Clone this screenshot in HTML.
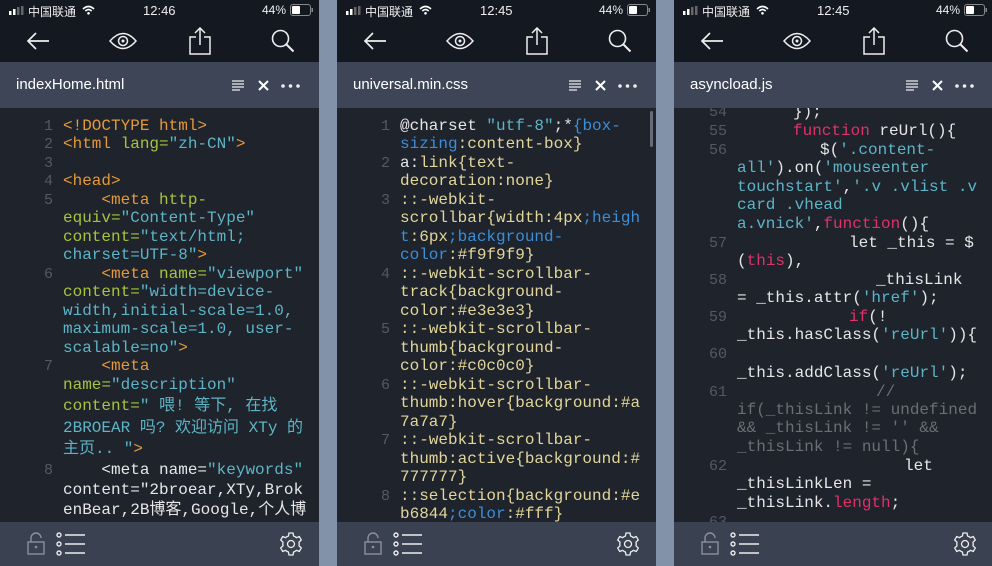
<!DOCTYPE html>
<html><head><meta charset="utf-8"><style>
*{margin:0;padding:0;box-sizing:border-box}
body{width:992px;height:566px;background:#8292a8;position:relative;overflow:hidden;font-family:"Liberation Sans","Noto Sans CJK SC",sans-serif}
.p{position:absolute;top:0;width:319px;height:566px;background:#1e232c;overflow:hidden}
.sb{position:absolute;left:0;top:0;width:100%;height:62px;background:#141821;color:#fff}
.st{position:absolute;top:3px;font-size:12px;color:#eee}
.tb{position:absolute;left:0;top:62px;width:100%;height:46px;background:#3e4557}
.ti{position:absolute;left:16px;top:14px;font-size:15px;color:#fff}
.bb{position:absolute;left:0;top:522px;width:100%;height:44px;background:#3a4150}
.code{position:absolute;left:0;top:0;width:100%;font-family:"Liberation Mono","Noto Sans CJK SC",monospace;font-size:16px;white-space:pre;color:#e6e6e6}
.r{position:absolute;left:63px;height:19px;line-height:19px}
.n{position:absolute;width:30px;text-align:right;height:19px;line-height:19px;color:#535a66;font-size:15px}
.t{color:#e5993a}.a{color:#a6c43c}.s{color:#5db5c6}.b{color:#3b8ed8}.y{color:#e2d69a}.pk{color:#df3269}.c{color:#6b6e72}
svg{position:absolute}
</style></head><body>

<!-- reusable chrome via repeated markup -->
<div class="p" style="left:0">
 <div class="sb">
  <svg style="left:9px;top:6px" width="16" height="9"><rect x="0" y="5" width="2.5" height="4" fill="#fff"/><rect x="4" y="3" width="2.5" height="6" fill="#fff"/><rect x="8" y="1" width="2.5" height="8" fill="#666"/><rect x="12" y="0" width="2.5" height="9" fill="#666"/></svg>
  <span class="st" style="left:28px">中国联通</span>
  <svg style="left:82px;top:5px" width="13" height="10"><path d="M1 4 Q6.5 -1 12 4" stroke="#fff" stroke-width="1.6" fill="none"/><path d="M3.3 6 Q6.5 3 9.7 6" stroke="#fff" stroke-width="1.6" fill="none"/><circle cx="6.5" cy="8.3" r="1.3" fill="#fff"/></svg>
  <span class="st" style="left:143px;font-size:13px">12:46</span>
  <span class="st" style="left:262px">44%</span>
  <svg style="left:290px;top:4px" width="24" height="12"><rect x="0.5" y="0.5" width="20" height="11" rx="2.5" stroke="#888" fill="none"/><rect x="2" y="2" width="8" height="8" rx="1" fill="#fff"/><rect x="21.5" y="4" width="1.5" height="4" fill="#888"/></svg>
  <svg style="left:26px;top:32px" width="24" height="18"><path d="M23 9H2M10 1L2 9l8 8" stroke="#eee" stroke-width="1.7" fill="none"/></svg>
  <svg style="left:109px;top:32px" width="28" height="18"><path d="M1 9Q14 -6 27 9Q14 24 1 9Z" stroke="#eee" stroke-width="1.5" fill="none"/><circle cx="14" cy="9" r="4.5" stroke="#eee" stroke-width="1.5" fill="none"/><circle cx="14" cy="9" r="1.5" fill="#eee"/></svg>
  <svg style="left:189px;top:27px" width="22" height="28"><path d="M7 10H1V27H21V10H15M11 18V1M6 6l5-5 5 5" stroke="#eee" stroke-width="1.5" fill="none"/></svg>
  <svg style="left:271px;top:29px" width="24" height="24"><circle cx="9.5" cy="9.5" r="8" stroke="#eee" stroke-width="1.6" fill="none"/><path d="M15.5 15.5L22.5 22.5" stroke="#eee" stroke-width="2"/></svg>
 </div>
 <div class="tb"><span class="ti">indexHome.html</span>
  <svg style="left:232px;top:18px" width="12" height="11"><path d="M0 1H12M0 4H12M0 7H12M0 10H8" stroke="#eee" stroke-width="1.3"/></svg>
  <svg style="left:258px;top:18px" width="11" height="11"><path d="M1 1L10 10M10 1L1 10" stroke="#fff" stroke-width="2"/></svg>
  <svg style="left:281px;top:22px" width="19" height="4"><circle cx="2" cy="2" r="1.8" fill="#eee"/><circle cx="9.5" cy="2" r="1.8" fill="#eee"/><circle cx="17" cy="2" r="1.8" fill="#eee"/></svg>
 </div>
 <div class="code">
  <div class="n" style="left:23px;top:117px">1</div><div class="r" style="top:117px"><span class="t">&lt;!DOCTYPE html&gt;</span></div>
  <div class="n" style="left:23px;top:135px">2</div><div class="r" style="top:135px"><span class="t">&lt;html </span><span class="a">lang=</span><span class="s">"zh-CN"</span><span class="t">&gt;</span></div>
  <div class="n" style="left:23px;top:154px">3</div>
  <div class="n" style="left:23px;top:172px">4</div><div class="r" style="top:172px"><span class="t">&lt;head&gt;</span></div>
  <div class="n" style="left:23px;top:191px">5</div><div class="r" style="top:191px"><span class="t">    &lt;meta </span><span class="a">http-</span></div>
  <div class="r" style="top:209px"><span class="a">equiv=</span><span class="s">"Content-Type"</span></div>
  <div class="r" style="top:228px"><span class="a">content=</span><span class="s">"text/html;</span></div>
  <div class="r" style="top:246px"><span class="s">charset=UTF-8"</span><span class="t">&gt;</span></div>
  <div class="n" style="left:23px;top:265px">6</div><div class="r" style="top:265px"><span class="t">    &lt;meta </span><span class="a">name=</span><span class="s">"viewport"</span></div>
  <div class="r" style="top:283px"><span class="a">content=</span><span class="s">"width=device-</span></div>
  <div class="r" style="top:302px"><span class="s">width,initial-scale=1.0,</span></div>
  <div class="r" style="top:320px"><span class="s">maximum-scale=1.0, user-</span></div>
  <div class="r" style="top:339px"><span class="s">scalable=no"</span><span class="t">&gt;</span></div>
  <div class="n" style="left:23px;top:357px">7</div><div class="r" style="top:357px"><span class="t">    &lt;meta</span></div>
  <div class="r" style="top:376px"><span class="a">name=</span><span class="s">"description"</span></div>
  <div class="r" style="top:397px"><span class="a">content=</span><span class="s">" 喂! 等下, 在找</span></div>
  <div class="r" style="top:419px"><span class="s">2BROEAR 吗? 欢迎访问 XTy 的</span></div>
  <div class="r" style="top:440px"><span class="s">主页.. "</span><span class="t">&gt;</span></div>
  <div class="n" style="left:23px;top:461px">8</div><div class="r" style="top:461px">    &lt;meta name=<span class="s">"keywords"</span></div>
  <div class="r" style="top:481px">content="2broear,XTy,Brok</div>
  <div class="r" style="top:501px">enBear,2B博客,Google,个人博</div>
 </div>
 <div class="bb">
  <svg style="left:27px;top:10px" width="18" height="23"><path d="M4 10V6a5 5 0 0 1 10 0" stroke="#8a909c" stroke-width="1.4" fill="none"/><rect x="1" y="10" width="16" height="12" stroke="#8a909c" stroke-width="1.4" fill="none"/><circle cx="9" cy="15" r="1.3" fill="#8a909c"/></svg>
  <svg style="left:56px;top:10px" width="30" height="24"><g stroke="#eee" stroke-width="1.4" fill="none"><circle cx="3" cy="3" r="2"/><circle cx="3" cy="12" r="2"/><circle cx="3" cy="21" r="2"/><path d="M9 3H29M9 12H29M9 21H29"/></g></svg>
  <svg style="left:279px;top:10px" width="24" height="24"><g transform="translate(12 12)" stroke="#eee" stroke-width="1.3" fill="none"><circle r="3.5"/><path d="M-2 -11H2L2.6 -8A8 8 0 0 1 5.4 -6.4L8.3 -7.4L10.3 -4L8 -1.8A8 8 0 0 1 8 1.8L10.3 4L8.3 7.4L5.4 6.4A8 8 0 0 1 2.6 8L2 11H-2L-2.6 8A8 8 0 0 1 -5.4 6.4L-8.3 7.4L-10.3 4L-8 1.8A8 8 0 0 1 -8 -1.8L-10.3 -4L-8.3 -7.4L-5.4 -6.4A8 8 0 0 1 -2.6 -8Z"/></g></svg>
 </div>
</div>

<div class="p" style="left:337px">
 <div class="sb">
  <svg style="left:9px;top:6px" width="16" height="9"><rect x="0" y="5" width="2.5" height="4" fill="#fff"/><rect x="4" y="3" width="2.5" height="6" fill="#fff"/><rect x="8" y="1" width="2.5" height="8" fill="#666"/><rect x="12" y="0" width="2.5" height="9" fill="#666"/></svg>
  <span class="st" style="left:28px">中国联通</span>
  <svg style="left:82px;top:5px" width="13" height="10"><path d="M1 4 Q6.5 -1 12 4" stroke="#fff" stroke-width="1.6" fill="none"/><path d="M3.3 6 Q6.5 3 9.7 6" stroke="#fff" stroke-width="1.6" fill="none"/><circle cx="6.5" cy="8.3" r="1.3" fill="#fff"/></svg>
  <span class="st" style="left:143px;font-size:13px">12:45</span>
  <span class="st" style="left:262px">44%</span>
  <svg style="left:290px;top:4px" width="24" height="12"><rect x="0.5" y="0.5" width="20" height="11" rx="2.5" stroke="#888" fill="none"/><rect x="2" y="2" width="8" height="8" rx="1" fill="#fff"/><rect x="21.5" y="4" width="1.5" height="4" fill="#888"/></svg>
  <svg style="left:26px;top:32px" width="24" height="18"><path d="M23 9H2M10 1L2 9l8 8" stroke="#eee" stroke-width="1.7" fill="none"/></svg>
  <svg style="left:109px;top:32px" width="28" height="18"><path d="M1 9Q14 -6 27 9Q14 24 1 9Z" stroke="#eee" stroke-width="1.5" fill="none"/><circle cx="14" cy="9" r="4.5" stroke="#eee" stroke-width="1.5" fill="none"/><circle cx="14" cy="9" r="1.5" fill="#eee"/></svg>
  <svg style="left:189px;top:27px" width="22" height="28"><path d="M7 10H1V27H21V10H15M11 18V1M6 6l5-5 5 5" stroke="#eee" stroke-width="1.5" fill="none"/></svg>
  <svg style="left:271px;top:29px" width="24" height="24"><circle cx="9.5" cy="9.5" r="8" stroke="#eee" stroke-width="1.6" fill="none"/><path d="M15.5 15.5L22.5 22.5" stroke="#eee" stroke-width="2"/></svg>
 </div>
 <div class="tb"><span class="ti">universal.min.css</span>
  <svg style="left:232px;top:18px" width="12" height="11"><path d="M0 1H12M0 4H12M0 7H12M0 10H8" stroke="#eee" stroke-width="1.3"/></svg>
  <svg style="left:258px;top:18px" width="11" height="11"><path d="M1 1L10 10M10 1L1 10" stroke="#fff" stroke-width="2"/></svg>
  <svg style="left:281px;top:22px" width="19" height="4"><circle cx="2" cy="2" r="1.8" fill="#eee"/><circle cx="9.5" cy="2" r="1.8" fill="#eee"/><circle cx="17" cy="2" r="1.8" fill="#eee"/></svg>
 </div>
 <div style="position:absolute;left:313px;top:111px;width:3px;height:36px;background:#666c78;border-radius:2px"></div>
 <div class="code">
  <div class="n" style="left:23px;top:117px">1</div><div class="r" style="top:117px">@charset <span class="s">"utf-8"</span>;*<span class="b">{box-</span></div>
  <div class="r" style="top:135px"><span class="b">sizing</span><span class="y">:content-box}</span></div>
  <div class="n" style="left:23px;top:154px">2</div><div class="r" style="top:154px">a:<span class="y">link{text-</span></div>
  <div class="r y" style="top:172px">decoration:none}</div>
  <div class="n" style="left:23px;top:191px">3</div><div class="r y" style="top:191px">::-webkit-</div>
  <div class="r" style="top:209px"><span class="y">scrollbar{width:4px</span><span class="b">;heigh</span></div>
  <div class="r" style="top:228px"><span class="b">t</span><span class="y">:6px</span><span class="b">;background-</span></div>
  <div class="r" style="top:246px"><span class="b">color</span><span class="y">:#f9f9f9}</span></div>
  <div class="n" style="left:23px;top:265px">4</div><div class="r y" style="top:265px">::-webkit-scrollbar-</div>
  <div class="r y" style="top:283px">track{background-</div>
  <div class="r y" style="top:302px">color:#e3e3e3}</div>
  <div class="n" style="left:23px;top:320px">5</div><div class="r y" style="top:320px">::-webkit-scrollbar-</div>
  <div class="r y" style="top:339px">thumb{background-</div>
  <div class="r y" style="top:357px">color:#c0c0c0}</div>
  <div class="n" style="left:23px;top:376px">6</div><div class="r y" style="top:376px">::-webkit-scrollbar-</div>
  <div class="r y" style="top:394px">thumb:hover{background:#a</div>
  <div class="r y" style="top:413px">7a7a7}</div>
  <div class="n" style="left:23px;top:431px">7</div><div class="r y" style="top:431px">::-webkit-scrollbar-</div>
  <div class="r y" style="top:450px">thumb:active{background:#</div>
  <div class="r y" style="top:468px">777777}</div>
  <div class="n" style="left:23px;top:487px">8</div><div class="r y" style="top:487px">::selection{background:#e</div>
  <div class="r" style="top:505px"><span class="y">b6844</span><span class="b">;color</span><span class="y">:#fff}</span></div>
 </div>
 <div class="bb">
  <svg style="left:27px;top:10px" width="18" height="23"><path d="M4 10V6a5 5 0 0 1 10 0" stroke="#8a909c" stroke-width="1.4" fill="none"/><rect x="1" y="10" width="16" height="12" stroke="#8a909c" stroke-width="1.4" fill="none"/><circle cx="9" cy="15" r="1.3" fill="#8a909c"/></svg>
  <svg style="left:56px;top:10px" width="30" height="24"><g stroke="#eee" stroke-width="1.4" fill="none"><circle cx="3" cy="3" r="2"/><circle cx="3" cy="12" r="2"/><circle cx="3" cy="21" r="2"/><path d="M9 3H29M9 12H29M9 21H29"/></g></svg>
  <svg style="left:279px;top:10px" width="24" height="24"><g transform="translate(12 12)" stroke="#eee" stroke-width="1.3" fill="none"><circle r="3.5"/><path d="M-2 -11H2L2.6 -8A8 8 0 0 1 5.4 -6.4L8.3 -7.4L10.3 -4L8 -1.8A8 8 0 0 1 8 1.8L10.3 4L8.3 7.4L5.4 6.4A8 8 0 0 1 2.6 8L2 11H-2L-2.6 8A8 8 0 0 1 -5.4 6.4L-8.3 7.4L-10.3 4L-8 1.8A8 8 0 0 1 -8 -1.8L-10.3 -4L-8.3 -7.4L-5.4 -6.4A8 8 0 0 1 -2.6 -8Z"/></g></svg>
 </div>
</div>

<div class="p" style="left:674px;width:318px">
 <div class="sb">
  <svg style="left:9px;top:6px" width="16" height="9"><rect x="0" y="5" width="2.5" height="4" fill="#fff"/><rect x="4" y="3" width="2.5" height="6" fill="#fff"/><rect x="8" y="1" width="2.5" height="8" fill="#666"/><rect x="12" y="0" width="2.5" height="9" fill="#666"/></svg>
  <span class="st" style="left:28px">中国联通</span>
  <svg style="left:82px;top:5px" width="13" height="10"><path d="M1 4 Q6.5 -1 12 4" stroke="#fff" stroke-width="1.6" fill="none"/><path d="M3.3 6 Q6.5 3 9.7 6" stroke="#fff" stroke-width="1.6" fill="none"/><circle cx="6.5" cy="8.3" r="1.3" fill="#fff"/></svg>
  <span class="st" style="left:143px;font-size:13px">12:45</span>
  <span class="st" style="left:262px">44%</span>
  <svg style="left:290px;top:4px" width="24" height="12"><rect x="0.5" y="0.5" width="20" height="11" rx="2.5" stroke="#888" fill="none"/><rect x="2" y="2" width="8" height="8" rx="1" fill="#fff"/><rect x="21.5" y="4" width="1.5" height="4" fill="#888"/></svg>
  <svg style="left:26px;top:32px" width="24" height="18"><path d="M23 9H2M10 1L2 9l8 8" stroke="#eee" stroke-width="1.7" fill="none"/></svg>
  <svg style="left:109px;top:32px" width="28" height="18"><path d="M1 9Q14 -6 27 9Q14 24 1 9Z" stroke="#eee" stroke-width="1.5" fill="none"/><circle cx="14" cy="9" r="4.5" stroke="#eee" stroke-width="1.5" fill="none"/><circle cx="14" cy="9" r="1.5" fill="#eee"/></svg>
  <svg style="left:189px;top:27px" width="22" height="28"><path d="M7 10H1V27H21V10H15M11 18V1M6 6l5-5 5 5" stroke="#eee" stroke-width="1.5" fill="none"/></svg>
  <svg style="left:271px;top:29px" width="24" height="24"><circle cx="9.5" cy="9.5" r="8" stroke="#eee" stroke-width="1.6" fill="none"/><path d="M15.5 15.5L22.5 22.5" stroke="#eee" stroke-width="2"/></svg>
 </div>
 <div class="code">
  <div class="n" style="left:23px;top:103px">54</div><div class="r" style="top:103px;left:119px">});</div>
  <div class="n" style="left:23px;top:122px">55</div><div class="r" style="top:122px;left:119px"><span class="pk">function</span> reUrl(){</div>
  <div class="n" style="left:23px;top:141px">56</div><div class="r" style="top:141px;left:146px">$(<span class="s">'.content-</span></div>
  <div class="r" style="top:159px"><span class="s">all'</span>).on(<span class="s">'mouseenter</span></div>
  <div class="r" style="top:178px"><span class="s">touchstart'</span>,<span class="s">'.v .vlist .v</span></div>
  <div class="r" style="top:196px"><span class="s">card .vhead</span></div>
  <div class="r" style="top:215px"><span class="s">a.vnick'</span>,<span class="pk">function</span>(){</div>
  <div class="n" style="left:23px;top:234px">57</div><div class="r" style="top:234px;left:175px">let _this = $</div>
  <div class="r" style="top:252px">(<span class="pk">this</span>),</div>
  <div class="n" style="left:23px;top:271px">58</div><div class="r" style="top:271px;left:202px">_thisLink</div>
  <div class="r" style="top:289px">= _this.attr(<span class="s">'href'</span>);</div>
  <div class="n" style="left:23px;top:308px">59</div><div class="r" style="top:308px;left:175px"><span class="pk">if</span>(!</div>
  <div class="r" style="top:326px">_this.hasClass(<span class="s">'reUrl'</span>)){</div>
  <div class="n" style="left:23px;top:345px">60</div>
  <div class="r" style="top:364px">_this.addClass(<span class="s">'reUrl'</span>);</div>
  <div class="n" style="left:23px;top:383px">61</div><div class="r c" style="top:383px;left:202px">//</div>
  <div class="r c" style="top:401px">if(_thisLink != undefined</div>
  <div class="r c" style="top:419px">&amp;&amp; _thisLink != '' &amp;&amp;</div>
  <div class="r c" style="top:438px">_thisLink != null){</div>
  <div class="n" style="left:23px;top:457px">62</div><div class="r" style="top:457px;left:230px">let</div>
  <div class="r" style="top:475px">_thisLinkLen =</div>
  <div class="r" style="top:494px">_thisLink.<span class="pk">length</span>;</div>
  <div class="n" style="left:23px;top:513px">63</div>
 </div>
 <div class="tb"><span class="ti">asyncload.js</span>
  <svg style="left:232px;top:18px" width="12" height="11"><path d="M0 1H12M0 4H12M0 7H12M0 10H8" stroke="#eee" stroke-width="1.3"/></svg>
  <svg style="left:258px;top:18px" width="11" height="11"><path d="M1 1L10 10M10 1L1 10" stroke="#fff" stroke-width="2"/></svg>
  <svg style="left:281px;top:22px" width="19" height="4"><circle cx="2" cy="2" r="1.8" fill="#eee"/><circle cx="9.5" cy="2" r="1.8" fill="#eee"/><circle cx="17" cy="2" r="1.8" fill="#eee"/></svg>
 </div>
 <div class="bb">
  <svg style="left:27px;top:10px" width="18" height="23"><path d="M4 10V6a5 5 0 0 1 10 0" stroke="#8a909c" stroke-width="1.4" fill="none"/><rect x="1" y="10" width="16" height="12" stroke="#8a909c" stroke-width="1.4" fill="none"/><circle cx="9" cy="15" r="1.3" fill="#8a909c"/></svg>
  <svg style="left:56px;top:10px" width="30" height="24"><g stroke="#eee" stroke-width="1.4" fill="none"><circle cx="3" cy="3" r="2"/><circle cx="3" cy="12" r="2"/><circle cx="3" cy="21" r="2"/><path d="M9 3H29M9 12H29M9 21H29"/></g></svg>
  <svg style="left:279px;top:10px" width="24" height="24"><g transform="translate(12 12)" stroke="#eee" stroke-width="1.3" fill="none"><circle r="3.5"/><path d="M-2 -11H2L2.6 -8A8 8 0 0 1 5.4 -6.4L8.3 -7.4L10.3 -4L8 -1.8A8 8 0 0 1 8 1.8L10.3 4L8.3 7.4L5.4 6.4A8 8 0 0 1 2.6 8L2 11H-2L-2.6 8A8 8 0 0 1 -5.4 6.4L-8.3 7.4L-10.3 4L-8 1.8A8 8 0 0 1 -8 -1.8L-10.3 -4L-8.3 -7.4L-5.4 -6.4A8 8 0 0 1 -2.6 -8Z"/></g></svg>
 </div>
</div>
</body></html>
